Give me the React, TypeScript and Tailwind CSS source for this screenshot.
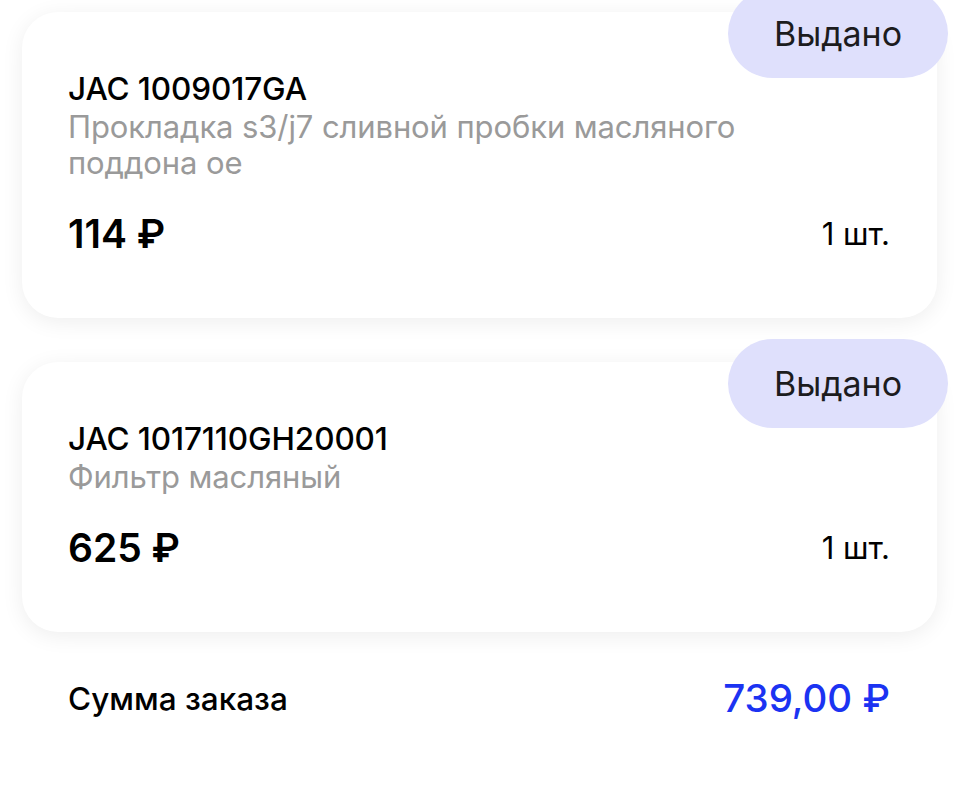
const items = [
  { id: "JAC 1009017GA", name: "Прокладка s3/j7 сливной пробки масляного поддона ое", price: "114 ₽", qty: "1 шт.", status: "Выдано" },
  { id: "JAC 1017110GH20001", name: "Фильтр масляный", price: "625 ₽", qty: "1 шт.", status: "Выдано" },
];

const OrderItem = ({ id, name, price, qty, status }: (typeof items)[number]) => {
  return (
    <div className="relative bg-white rounded-[36px] shadow-[0_4px_22px_rgba(0,0,0,0.07)] pt-[59px] pb-[65px] pl-[46px] pr-[47px]">
      <span className="absolute -top-[23px] -right-[11px] w-[220px] h-[89px] rounded-full bg-[#dfe0fc] flex items-center justify-center text-[34px] text-[#1c1c1e]">
        {status}
      </span>
      <h3 className="text-[31.5px] leading-[36px] font-medium text-black tracking-[-0.1px]">{id}</h3>
      <p className="mt-[2px] text-[31px] leading-[36px] text-[#9a9a9a] max-w-[700px] tracking-[-0.1px]">{name}</p>
      <div className="mt-[34px] flex justify-between items-center h-[38px]">
        <span className="text-[39px] font-semibold text-black">{price}</span>
        <span className="text-[31px] text-black">{qty}</span>
      </div>
    </div>
  );
};

export default function App() {
  return (
    <main className="w-[960px] h-[790px] bg-white overflow-hidden font-['Inter','Noto_Sans',sans-serif]">
      <div className="pt-[12px] pl-[22px] pr-[23px] flex flex-col gap-[44px]">
        {items.map((item) => (
          <OrderItem key={item.id} {...item} />
        ))}
      </div>
      <div className="mt-[38px] pl-[68px] pr-[70px] flex justify-between items-center">
        <span className="text-[31.5px] font-medium text-black">Сумма заказа</span>
        <span className="text-[38.5px] font-medium text-[#1b33f2]">739,00 ₽</span>
      </div>
    </main>
  );
}
